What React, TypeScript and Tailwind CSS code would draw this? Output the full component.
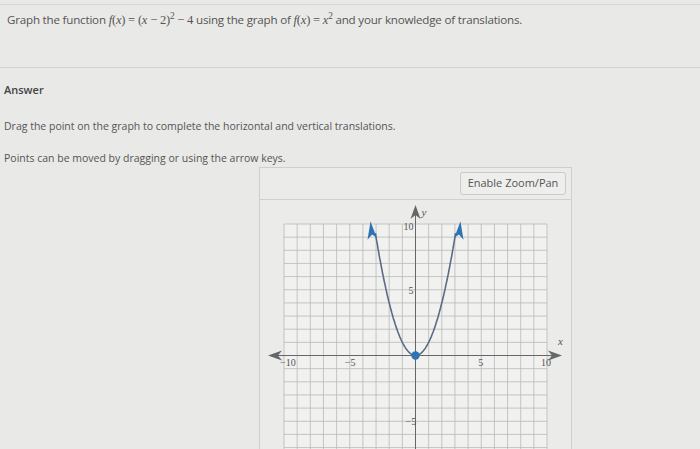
import React from 'react';

const U = 13.15;
const OX = 155.5;
const OY = 155.5;
const px = (x: number) => OX + x * U;
const py = (y: number) => OY - y * U;

const lbl = "font-['Liberation_Serif',serif] text-[10px] fill-[#555]";
const ital = "font-['Liberation_Serif',serif] italic text-[11px] fill-[#555]";

function Graph() {
  const lines: React.ReactNode[] = [];
  for (let i = -10; i <= 10; i++) {
    if (i === 0) continue;
    lines.push(<line key={'v' + i} x1={px(i)} y1={py(10)} x2={px(i)} y2={py(-8)} stroke="#b9b9b9" strokeWidth={0.8} />);
  }
  for (let j = -7; j <= 10; j++) {
    if (j === 0) continue;
    lines.push(<line key={'h' + j} x1={px(-10)} y1={py(j)} x2={px(10)} y2={py(j)} stroke="#b9b9b9" strokeWidth={0.8} />);
  }
  // f(x) = x^2, clipped at the top of the grid
  const pts: string[] = [];
  for (let t = -3.05; t <= 3.05; t += 0.05) pts.push(`${px(t).toFixed(1)},${py(t * t).toFixed(1)}`);
  return (
    <svg width={313} height={260} className="block">
      <rect x={px(-10)} y={py(10)} width={20 * U} height={18 * U} fill="#f1f1ef" />
      {lines}
      {/* x axis */}
      <line x1={14} y1={OY} x2={296} y2={OY} stroke="#666" strokeWidth={1} />
      <polygon points={`8,${OY} 22,${OY - 5} 18,${OY} 22,${OY + 5}`} fill="#666" />
      <polygon points={`302,${OY} 288,${OY - 5} 292,${OY} 288,${OY + 5}`} fill="#666" />
      {/* y axis */}
      <line x1={OX} y1={12} x2={OX} y2={262} stroke="#666" strokeWidth={1} />
      <polygon points={`${OX},5 ${OX - 5},19 ${OX},15 ${OX + 5},19`} fill="#666" />
      <text x={px(-10) - 4} y={OY + 10} className={lbl}>−10</text>
      <text x={px(-5) - 5} y={OY + 10} className={lbl}>−5</text>
      <text x={px(5) - 3} y={OY + 10} className={lbl}>5</text>
      <text x={px(10) - 6} y={OY + 10} className={lbl}>10</text>
      <text x={OX - 12} y={py(10) + 6} className={lbl}>10</text>
      <text x={OX - 7} y={py(5) + 4} className={lbl}>5</text>
      <text x={OX - 10} y={py(-5) + 4} className={lbl}>−5</text>
      <text x={OX + 6} y={16} className={ital}>y</text>
      <text x={298} y={OY - 11} className={ital}>x</text>
      <polyline points={pts.join(' ')} fill="none" stroke="#5b6b85" strokeWidth={1.6} />
      <polygon points={`${px(-3.42)},${py(10.2)} ${px(-3.65)},${py(8.8)} ${px(-3.3)},${py(9.2)} ${px(-2.95)},${py(8.95)}`} fill="#2f73b5" />
      <polygon points={`${px(3.42)},${py(10.2)} ${px(3.65)},${py(8.8)} ${px(3.3)},${py(9.2)} ${px(2.95)},${py(8.95)}`} fill="#2f73b5" />
      <circle cx={OX} cy={OY} r={4.2} fill="#2f73b5" />
    </svg>
  );
}

export default function App() {
  const math = "font-['Liberation_Serif',serif] text-[12.5px]";
  return (
    <div className="w-[700px] h-[449px] overflow-hidden bg-[#e9e9e7] text-[#555] font-['Open_Sans',sans-serif]">
      <div className="pt-[4px]">
        <div className="border-t border-[#d6d6d4]" />
        <div className="h-[62px] pl-[7px] pt-[6px] text-[11.6px] tracking-[-0.2px]">
          Graph the function{' '}
          <span className={math}>
            <i>f</i>(<i>x</i>) = (<i>x</i> − 2)<sup>2</sup> − 4
          </span>{' '}
          using the graph of{' '}
          <span className={math}>
            <i>f</i>(<i>x</i>) = <i>x</i><sup>2</sup>
          </span>{' '}
          and your knowledge of translations.
        </div>
        <div className="border-t border-[#d2d2d0]" />
        <div className="pl-[4px] pt-[14px] text-[11px] font-semibold text-[#444]">Answer</div>
        <div className="pl-[4px] pt-[20px] text-[10.5px] text-[#555]">Drag the point on the graph to complete the horizontal and vertical translations.</div>
        <div className="pl-[4px] pt-[17px] text-[10.5px] text-[#555]">Points can be moved by dragging or using the arrow keys.</div>
        <div className="ml-[259px] w-[313px] border border-[#cfcfcd] bg-[#ebebe9]">
          <div className="h-[32px] flex justify-end items-center pr-[5px] border-b border-[#d0d0ce]">
            <div className="h-[23px] w-[106px] border border-[#cacac8] rounded-[3px] bg-[#eeeeec] text-[11px] text-[#555] flex items-center justify-center">Enable Zoom/Pan</div>
          </div>
          <Graph />
        </div>
      </div>
    </div>
  );
}
